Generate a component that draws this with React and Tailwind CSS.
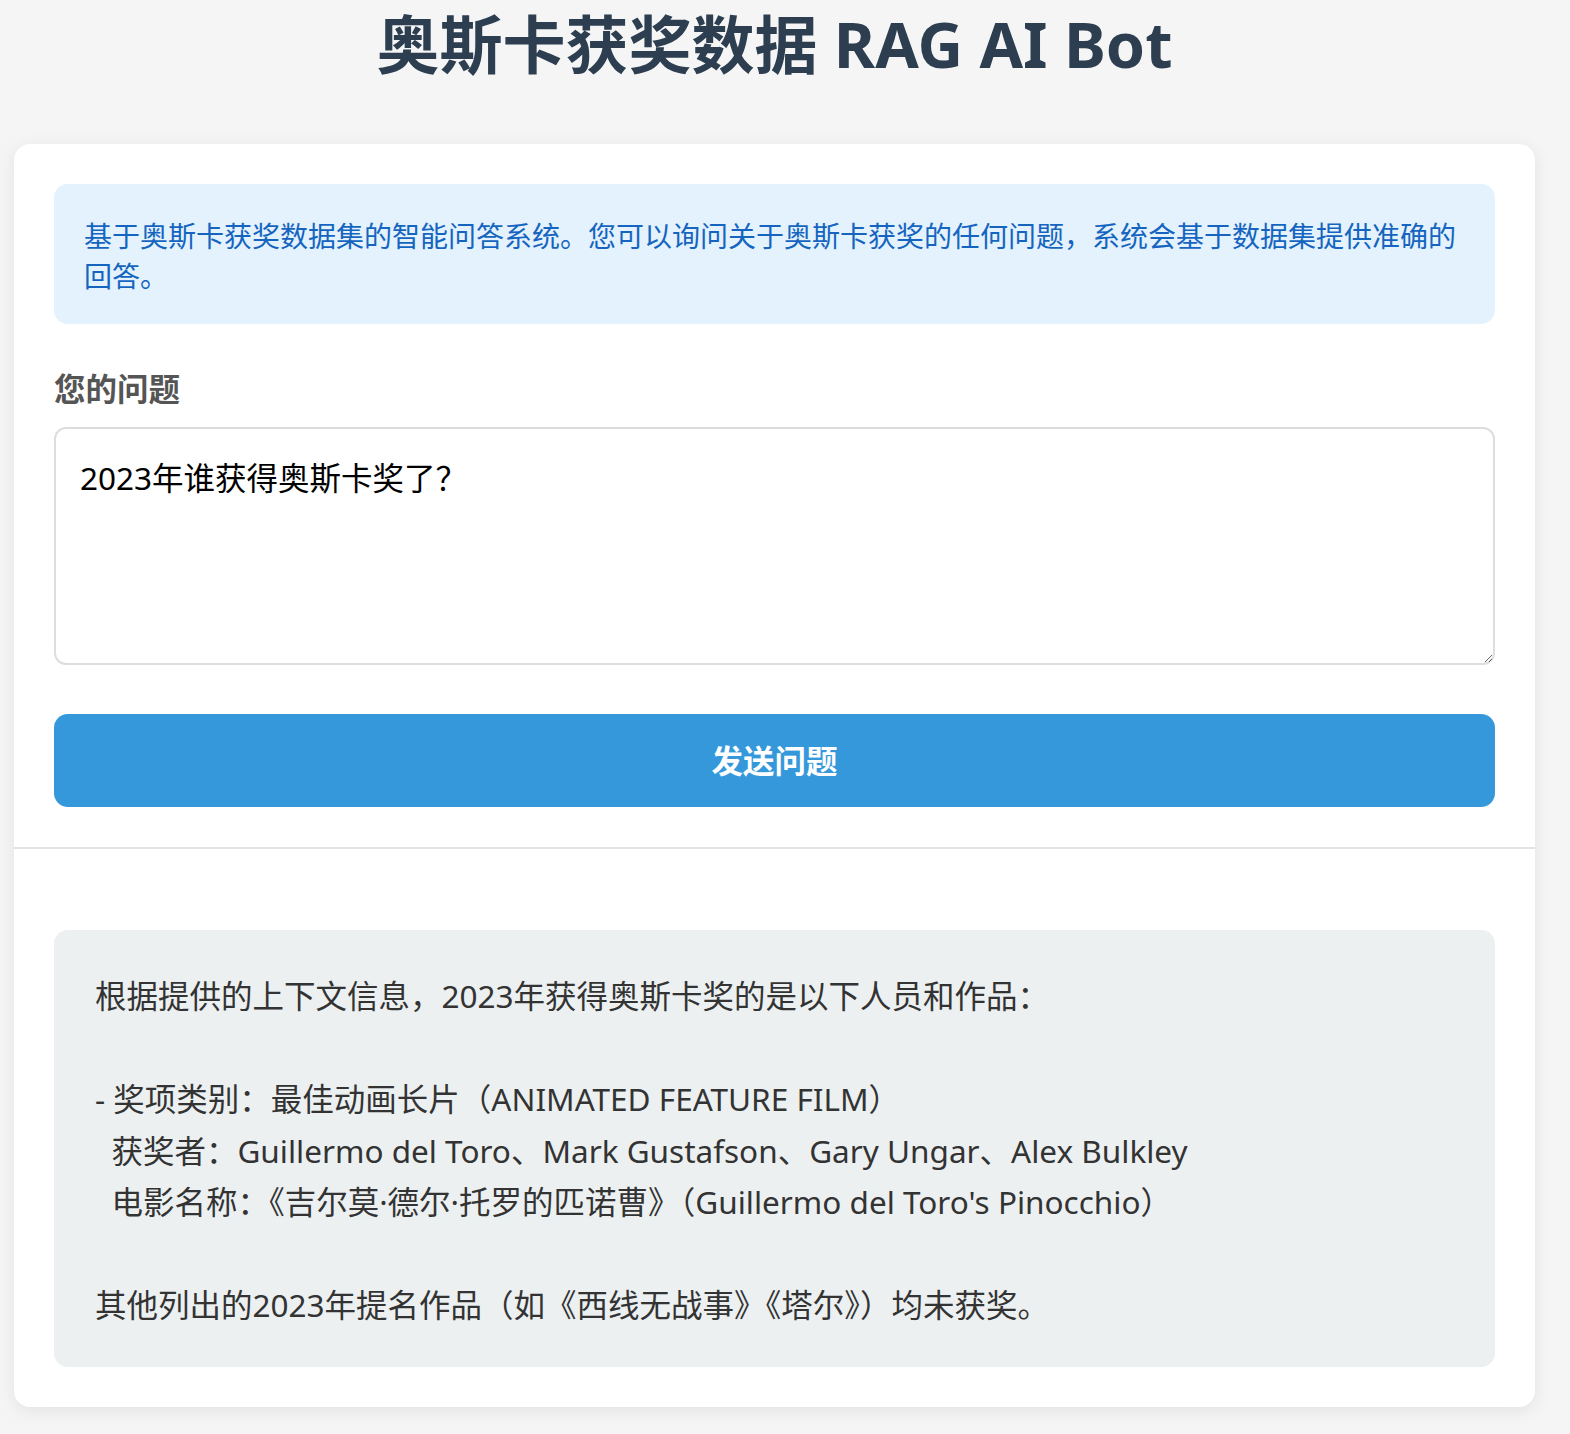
import { useState } from "react";

const answer = `根据提供的上下文信息，2023年获得奥斯卡奖的是以下人员和作品：

- 奖项类别：最佳动画长片（ANIMATED FEATURE FILM）
  获奖者：Guillermo del Toro、Mark Gustafson、Gary Ungar、Alex Bulkley
  电影名称：《吉尔莫·德尔·托罗的匹诺曹》（Guillermo del Toro's Pinocchio）

其他列出的2023年提名作品（如《西线无战事》《塔尔》）均未获奖。`;

const App = () => {
  const [question, setQuestion] = useState("2023年谁获得奥斯卡奖了？");

  return (
    <div
      className="min-h-screen bg-[#f5f5f5] pt-[6px] pb-[28px]"
      style={{ fontFamily: '"Noto Sans", "Noto Sans CJK SC", sans-serif' }}
    >
      <div className="ml-[14px] w-[1521px]">
        {/* Title */}
        <h1 className="text-center text-[63px] leading-[76px] font-bold text-[#2c3e50]">
          奥斯卡获奖数据 RAG AI Bot
        </h1>

        {/* Card */}
        <div className="mt-[62px] bg-white rounded-[16px] shadow-[0_4px_18px_rgba(0,0,0,0.08)]">
          <div className="p-[40px] border-b-2 border-[#e3e3e3]">
            <div className="bg-[#e3f2fd] rounded-[14px] px-[30px] pt-[32px] pb-[28px] text-[28px] leading-[40px] text-[#1565c0]">
              基于奥斯卡获奖数据集的智能问答系统。您可以询问关于奥斯卡获奖的任何问题，系统会基于数据集提供准确的回答。
            </div>

            <label className="block mt-[41px] text-[31.5px] leading-[47px] font-bold text-[#555]">
              您的问题
            </label>

            <textarea
              value={question}
              onChange={(e) => setQuestion(e.target.value)}
              className="mt-[15px] block w-full h-[238px] border-2 border-[#ddd] rounded-[12px] px-[24px] pt-[25px] text-[31.5px] leading-[47px] text-black outline-none"
              style={{ fontFamily: '"Noto Sans", "Noto Sans CJK SC", sans-serif' }}
            />

            <button className="mt-[49px] w-full h-[93px] bg-[#3498db] rounded-[14px] text-white text-[31.5px] font-bold">
              发送问题
            </button>
          </div>

          <div className="p-[40px]">
            <div className="mt-[41px] bg-[#ecf0f1] rounded-[14px] pl-[41px] pr-[40px] pt-[40px] pb-[36px] text-[31.5px] leading-[51.5px] text-[#333] whitespace-pre-wrap">
              {answer}
            </div>
          </div>
        </div>
      </div>
    </div>
  );
};

export default App;
